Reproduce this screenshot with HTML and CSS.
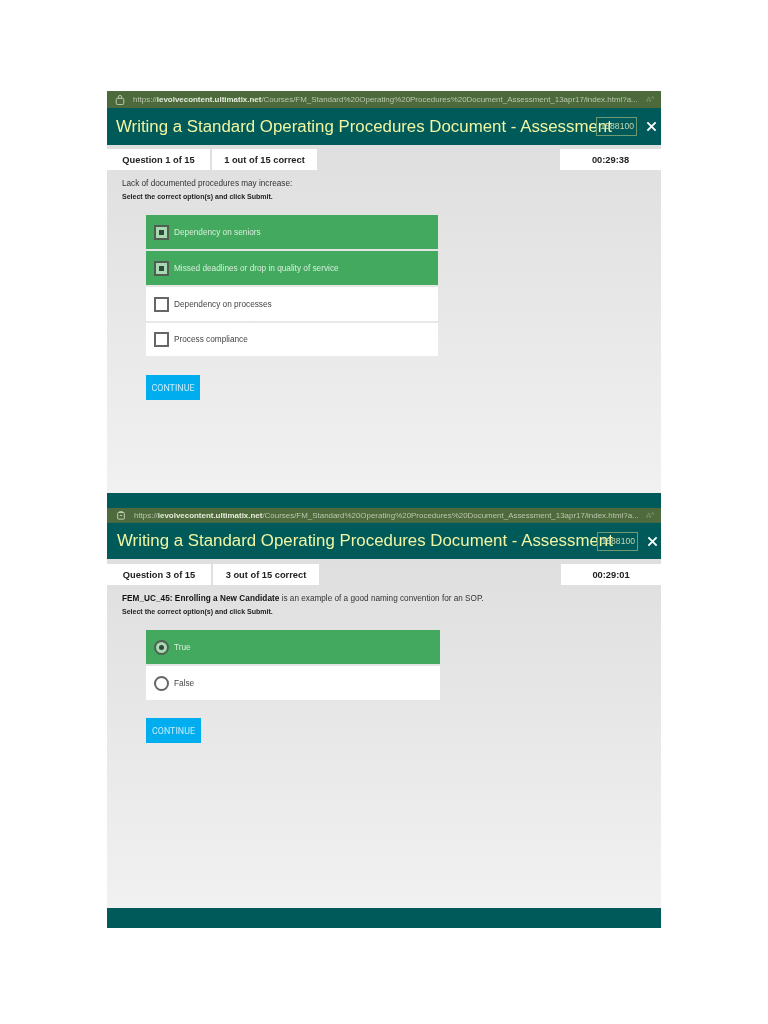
FILE: index.html
```html
<!DOCTYPE html>
<html lang="en">
<head>
<meta charset="utf-8">
<title>Assessment</title>
<link rel="stylesheet" href="styles.css">
</head>
<body>
<main class="page">
  <section class="screen screen-one">
    <div class="urlbar">
      <svg class="lock" viewBox="0 0 12 12"><rect x="1.5" y="4" width="9" height="7.5" rx="1.5" fill="none" stroke="#d5dcc8" stroke-width="1"/><path d="M4 4V2.5a2 2 0 0 1 4 0V4" fill="none" stroke="#d5dcc8" stroke-width="1"/></svg>
      <span class="url"><span class="scheme">https://</span><b>ievolvecontent.ultimatix.net</b>/Courses/FM_Standard%20Operating%20Procedures%20Document_Assessment_13apr17/index.html?a...</span>
      <span class="reader">A<sup>a</sup></span>
    </div>
    <header class="titlebar">
      <h1 class="title">Writing a Standard Operating Procedures Document - Assessment</h1>
      <span class="idbox">1588100</span>
      <svg class="close" viewBox="0 0 12 12"><path d="M1.5 1.5l9 9M10.5 1.5l-9 9" stroke="#fff" stroke-width="2"/></svg>
    </header>
    <div class="content">
      <div class="tabs">
        <div class="tab tab-q">Question 1 of 15</div>
        <div class="tab tab-c">1 out of 15 correct</div>
        <div class="tab tab-t">00:29:38</div>
      </div>
      <div class="question">
        <p class="prompt">Lack of documented procedures may increase:</p>
        <p class="hint">Select the correct option(s) and click Submit.</p>
      </div>
      <ul class="options">
        <li class="option selected"><span class="check"></span>Dependency on seniors</li>
        <li class="option selected"><span class="check"></span>Missed deadlines or drop in quality of service</li>
        <li class="option"><span class="check"></span>Dependency on processes</li>
        <li class="option"><span class="check"></span>Process compliance</li>
      </ul>
      <button class="continue" type="button">CONTINUE</button>
    </div>
  </section>

  <section class="screen screen-two">
    <div class="topband"></div>
    <div class="urlbar">
      <svg class="lock" viewBox="0 0 12 12"><rect x="2" y="3" width="8" height="8" rx="1" fill="none" stroke="#d5dcc8" stroke-width="1"/><path d="M4 3V2h4v1M4.500 6.500h3" fill="none" stroke="#d5dcc8" stroke-width="1"/></svg>
      <span class="url"><span class="scheme">https://</span><b>ievolvecontent.ultimatix.net</b>/Courses/FM_Standard%20Operating%20Procedures%20Document_Assessment_13apr17/index.html?a...</span>
      <span class="reader">A<sup>a</sup></span>
    </div>
    <header class="titlebar">
      <h1 class="title">Writing a Standard Operating Procedures Document - Assessment</h1>
      <span class="idbox">1588100</span>
      <svg class="close" viewBox="0 0 12 12"><path d="M1.5 1.5l9 9M10.500 1.5l-9 9" stroke="#fff" stroke-width="2"/></svg>
    </header>
    <div class="content">
      <div class="tabs">
        <div class="tab tab-q">Question 3 of 15</div>
        <div class="tab tab-c">3 out of 15 correct</div>
        <div class="tab tab-t">00:29:01</div>
      </div>
      <div class="question">
        <p class="prompt"><b>FEM_UC_45: Enrolling a New Candidate</b> is an example of a good naming convention for an SOP.</p>
        <p class="hint">Select the correct option(s) and click Submit.</p>
      </div>
      <ul class="options">
        <li class="option selected"><span class="radio"></span>True</li>
        <li class="option"><span class="radio"></span>False</li>
      </ul>
      <button class="continue" type="button">CONTINUE</button>
    </div>
    <footer class="footerbar"></footer>
  </section>
</main>
</body>
</html>
```
FILE: styles.css
```css
* { box-sizing: border-box; }
html, body { margin: 0; padding: 0; background: #fff; }
body { font-family: "Liberation Sans", Arial, sans-serif; height: 1024px; overflow: hidden; }

.page { width: 554px; margin-left: 107px; padding-top: 91px; filter: blur(0.4px); }
.screen { display: flex; flex-direction: column; }
.screen-one { height: 402px; }
.screen-two { height: 435px; }

.topband { height: 15px; background: #005a5a; }
.urlbar {
  display: flex; align-items: center; height: 17px; padding-left: 8px;
  background: #4c6a3c; color: #b9c6ac; font-size: 7.94px; white-space: nowrap;
}
.screen-two .urlbar { height: 15px; background: #4f6b3d; border-bottom: 1px solid #3f6a45; padding-left: 9px; }
.lock { width: 10px; height: 10px; flex: none; margin-right: 8px; }
.url { flex: 1; min-width: 0; overflow: hidden; }
.url b { color: #e4ebd9; font-weight: bold; }
.reader { flex: none; width: 15px; color: #7f9570; font-size: 8px; }
.reader sup { font-size: 5px; vertical-align: 3px; line-height: 0; }

.titlebar { display: flex; align-items: center; height: 37px; padding-left: 9px; background: #005a5a; }
.screen-two .titlebar { height: 36px; padding-left: 10px; }
.title {
  flex: 0 0 480px; min-width: 0; margin: 0; overflow: visible; white-space: nowrap;
  color: #f1f5a2; font-size: 16.85px; font-weight: normal;
}
.idbox {
  flex: none; width: 41px; height: 19px; line-height: 17px; padding-right: 2px; text-align: right;
  border: 1px solid #6d9a74; color: #c7d8b0; font-size: 8.6px;
}
.close { flex: none; width: 11px; height: 11px; margin-left: 9px; }

.content {
  flex: 1; display: flex; flex-direction: column; padding-top: 4px;
  background: linear-gradient(#dfdfdf, #f1f1f1);
}
.screen-two .content { padding-top: 5px; }
.tabs { display: flex; gap: 2px; height: 21px; }
.tab {
  display: flex; align-items: center; justify-content: center;
  background: #fff; color: #222; font-size: 9.3px; font-weight: bold;
}
.tab-q { width: 103px; }
.tab-c { width: 105px; }
.tab-t { width: 101px; margin-left: auto; }
.screen-two .tab-q { width: 104px; }
.screen-two .tab-c { width: 106px; }
.screen-two .tab-t { width: 100px; }

.question { padding: 8px 0 0 15px; }
.prompt { margin: 0; height: 13px; line-height: 12px; font-size: 8.2px; color: #333; }
.prompt b { color: #111; letter-spacing: 0.05px; }
.hint { margin: 0; height: 11px; line-height: 12px; font-size: 7.04px; font-weight: bold; color: #222; }

.options { list-style: none; margin: 13px 0 0 39px; padding: 0; width: 292px; display: flex; flex-direction: column; gap: 2px; }
.screen-two .options { width: 294px; }
.option {
  display: flex; align-items: center; height: 34px; padding-left: 8px;
  background: #fff; color: #444; font-size: 8.25px;
}
.screen-one .option:last-child { height: 33px; }
.option.selected { background: #43a95e; color: #d9efdc; }
.check { flex: none; width: 15px; height: 15px; margin-right: 5px; border: 2px solid #666; background: #fff; }
.selected .check { border-color: #4e5f52; background: #a9d9b2; display: flex; align-items: center; justify-content: center; }
.selected .check::after { content: ""; width: 5px; height: 5px; background: #2e4a38; }
.radio { flex: none; width: 15px; height: 15px; margin-right: 5px; border: 2px solid #666; border-radius: 50%; background: #fff; }
.selected .radio { border-color: #4e5f52; background: #a9d9b2; display: flex; align-items: center; justify-content: center; }
.selected .radio::after { content: ""; width: 5px; height: 5px; border-radius: 50%; background: #2e4a38; }

.continue {
  width: 54px; height: 25px; margin: 19px 0 0 39px; padding: 0; border: 0;
  background: #00aeef; color: #c5ecfb; font-family: Roboto, "Liberation Sans", sans-serif; font-size: 8.9px;
}
.screen-two .continue { width: 55px; margin-top: 18px; }
.footerbar { height: 20px; background: #005a5a; }
```
